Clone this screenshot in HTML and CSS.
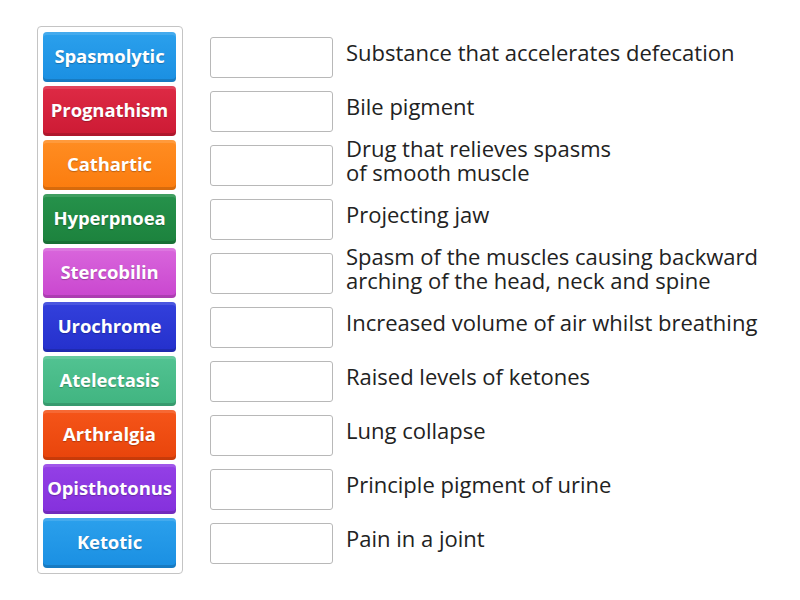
FILE: index.html
```html
<!DOCTYPE html>
<html lang="en">
<head>
<meta charset="utf-8">
<title>Match up</title>
<link rel="stylesheet" href="styles.css">
</head>
<body>
<main class="activity">
  <section class="tiles">
    <div class="tile t-blue">Spasmolytic</div>
    <div class="tile t-red">Prognathism</div>
    <div class="tile t-orange">Cathartic</div>
    <div class="tile t-green">Hyperpnoea</div>
    <div class="tile t-pink">Stercobilin</div>
    <div class="tile t-indigo">Urochrome</div>
    <div class="tile t-teal">Atelectasis</div>
    <div class="tile t-vermilion">Arthralgia</div>
    <div class="tile t-purple">Opisthotonus</div>
    <div class="tile t-blue">Ketotic</div>
  </section>
  <section class="targets">
    <div class="row"><div class="slot"></div><p class="def">Substance that accelerates defecation</p></div>
    <div class="row"><div class="slot"></div><p class="def">Bile pigment</p></div>
    <div class="row"><div class="slot"></div><p class="def">Drug that relieves spasms<br>of smooth muscle</p></div>
    <div class="row"><div class="slot"></div><p class="def">Projecting jaw</p></div>
    <div class="row"><div class="slot"></div><p class="def">Spasm of the muscles causing backward<br>arching of the head, neck and spine</p></div>
    <div class="row"><div class="slot"></div><p class="def">Increased volume of air whilst breathing</p></div>
    <div class="row"><div class="slot"></div><p class="def">Raised levels of ketones</p></div>
    <div class="row"><div class="slot"></div><p class="def">Lung collapse</p></div>
    <div class="row"><div class="slot"></div><p class="def">Principle pigment of urine</p></div>
    <div class="row"><div class="slot"></div><p class="def">Pain in a joint</p></div>
  </section>
</main>
</body>
</html>
```

FILE: styles.css
```css
html, body {
  margin: 0;
  background: #ffffff;
}

body {
  font-family: "Open Sans", "Liberation Sans", sans-serif;
  color: #222222;
}

.activity {
  display: flex;
  align-items: flex-start;
  gap: 27px;
  padding: 26px 0 0 37px;
}

/* draggable word tiles */
.tiles {
  display: flex;
  flex-direction: column;
  gap: 4px;
  padding: 5px 6px 5px 5px;
  border: 1px solid #c4c4c4;
  border-radius: 4px;
}

.tile {
  width: 133px;
  height: 50px;
  padding-bottom: 4px;
  box-sizing: border-box;
  display: flex;
  align-items: center;
  justify-content: center;
  border-radius: 4px;
  color: #ffffff;
  font-weight: 700;
  font-size: 18.5px;
  letter-spacing: -0.1px;
  text-shadow: 0 1px 1px rgba(0, 0, 0, 0.25);
  box-shadow: inset 0 -3px 0 rgba(0, 0, 0, 0.14), inset 0 3px 0 rgba(255, 255, 255, 0.12);
}

.t-blue { background: linear-gradient(#2ba0ec, #1a8fe2); }
.t-red { background: linear-gradient(#de2a45, #cc1a34); }
.t-orange { background: linear-gradient(#ff8d22, #fb7c0e); }
.t-green { background: linear-gradient(#26924b, #1c823d); }
.t-pink { background: linear-gradient(#d966dc, #c946cf); }
.t-indigo { background: linear-gradient(#3340dc, #2430cc); }
.t-teal { background: linear-gradient(#52c392, #40b480); }
.t-vermilion { background: linear-gradient(#f55519, #e8440b); }
.t-purple { background: linear-gradient(#9440e6, #8430dc); }

/* drop slots with their definitions */
.targets {
  display: flex;
  flex-direction: column;
  gap: 4px;
  padding-top: 6px;
}

.row {
  height: 50px;
  display: flex;
  align-items: center;
  gap: 13px;
}

.slot {
  flex: none;
  width: 121px;
  height: 39px;
  border: 1px solid #b8b8b8;
  border-radius: 3px;
  background: #ffffff;
}

.def {
  margin: 0 0 11px;
  font-size: 22px;
  line-height: 24px;
  color: #222222;
  white-space: nowrap;
}
```
